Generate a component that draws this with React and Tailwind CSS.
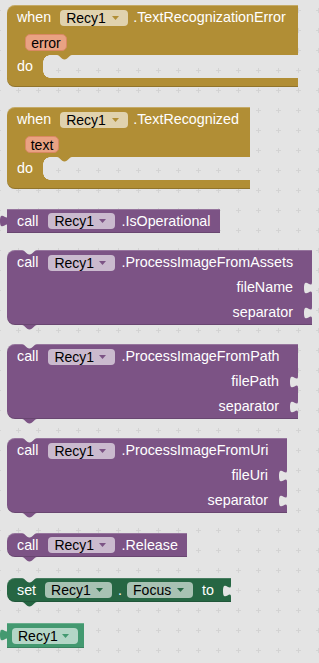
import React from "react";

const GOLD = "#b18e35";
const PURPLE = "#7c5385";
const SETG = "#266643";
const COMP = "#439970";
const BG = "#e4e4e4";

function Grid() {
  return (
    <svg className="absolute inset-0 h-full w-full" width="319" height="663">
      <defs>
        <pattern id="g" x="8" y="0" width="20" height="20" patternUnits="userSpaceOnUse">
          <rect x="8" y="10" width="5" height="1" fill="#d3d3d3" />
          <rect x="10" y="8" width="1" height="5" fill="#d3d3d3" />
        </pattern>
      </defs>
      <rect width="100%" height="100%" fill="url(#g)" />
    </svg>
  );
}

function Arrow({ fill }) {
  return (
    <svg width="7" height="4" viewBox="0 0 7 4" className="shrink-0">
      <path d="M0 0 H7 L3.5 4 Z" fill={fill} />
    </svg>
  );
}

function Dd({ label, fill, cls }) {
  return (
    <div className={"flex h-[16px] items-center justify-between rounded-[4px] bg-white/60 pl-[6px] pr-[9px] text-[14px] text-black " + cls}>
      <span className="leading-none">{label}</span>
      <Arrow fill={fill} />
    </div>
  );
}

const TAB = "M8 0 V5 C8 15 0 -3 0 12.5 C0 28 8 10 8 20 Z";

function OutTab({ fill }) {
  return (
    <svg className="absolute left-[-7px] top-[2px]" width="8" height="16" viewBox="0 0 8 20" preserveAspectRatio="none">
      <path d={TAB} fill={fill} />
    </svg>
  );
}

function Socket() {
  return (
    <svg className="absolute right-0 top-[3px]" width="8" height="16" viewBox="0 0 8 20" preserveAspectRatio="none">
      <path d={TAB} fill={BG} />
    </svg>
  );
}

function Notch() {
  return (
    <svg className="absolute left-[15px] top-0" width="15" height="5" viewBox="0 0 15 5">
      <path d="M0 0 C3 0 4 4.5 7.5 4.5 C11 4.5 12 0 15 0 Z" fill={BG} />
    </svg>
  );
}

function BottomTab({ fill }) {
  return (
    <svg className="absolute left-[15px] top-full" width="15" height="5" viewBox="0 0 15 5">
      <path d="M0 0 C3 0 4 4.5 7.5 4.5 C11 4.5 12 0 15 0 Z" fill={fill} />
    </svg>
  );
}

function EventBlock({ wcls, name, param, pcls, mcls }) {
  return (
    <div className={"relative text-white " + wcls + " " + mcls}>
      <div className="rounded-tl-[8px] bg-[#b18e35] pb-[4px] pl-[10px] pt-[4px] shadow-[inset_0_1px_0_rgba(255,255,255,0.25)]">
        <div className="flex h-[17px] items-center whitespace-nowrap">
          <span className="text-[14.3px] leading-none">when</span>
          <Dd label="Recy1" fill={GOLD} cls="ml-[9px] w-[68px]" />
          <span className="ml-[5px] text-[14.3px] leading-none">{name}</span>
        </div>
        <div className="mt-[8px] flex h-[17px]">
          <div className={"ml-[8px] flex h-[17px] items-center justify-center rounded-[5px] border border-[#d98863] bg-[#e9a283] text-[14px] leading-none text-black " + pcls}>
            {param}
          </div>
        </div>
      </div>
      <div className="flex h-[23px]">
        <div className="flex w-[36px] items-center bg-[#b18e35] pl-[10px] text-[14.3px] leading-none">do</div>
        <div className="relative flex-1">
          <div className="absolute left-0 top-0 h-[7px] w-[7px] bg-[radial-gradient(circle_at_100%_100%,transparent_6.5px,#b18e35_7px)]" />
          <div className="absolute bottom-0 left-0 h-[7px] w-[7px] bg-[radial-gradient(circle_at_100%_0%,transparent_6.5px,#b18e35_7px)]" />
          <svg className="absolute left-[14px] top-0" width="15" height="5" viewBox="0 0 15 5">
            <path d="M0 0 C3 0 4 4.5 7.5 4.5 C11 4.5 12 0 15 0 Z" fill={GOLD} />
          </svg>
        </div>
      </div>
      <div className="h-[9px] rounded-bl-[8px] bg-[#b18e35] shadow-[inset_0_-1px_0_rgba(0,0,0,0.18)]" />
    </div>
  );
}

function CallHead({ name }) {
  return (
    <div className="flex h-[25px] items-center whitespace-nowrap pl-[10px]">
      <span className="text-[14.3px] leading-none">call</span>
      <Dd label="Recy1" fill={PURPLE} cls="ml-[10px] w-[67px]" />
      <span className="ml-[6px] text-[14.3px] leading-none">{name}</span>
    </div>
  );
}

function ArgRow({ label }) {
  return (
    <div className="relative flex h-[25px] items-center justify-end pr-[19px]">
      <span className="text-[14.3px] leading-none">{label}</span>
      <Socket />
    </div>
  );
}

function ArgBlock({ wcls, mcls, name, a }) {
  return (
    <div className={"relative rounded-l-[8px] bg-[#7c5385] text-white shadow-[inset_0_1px_0_rgba(255,255,255,0.2),inset_0_-1px_0_rgba(0,0,0,0.15)] " + wcls + " " + mcls}>
      <Notch />
      <CallHead name={name} />
      <ArgRow label={a} />
      <ArgRow label="separator" />
      <BottomTab fill={PURPLE} />
    </div>
  );
}

export default function App() {
  return (
    <div className="relative h-[663px] w-[319px] overflow-hidden bg-[#e4e4e4] font-['Liberation_Sans',Arial,sans-serif]">
      <Grid />
      <div className="relative flex flex-col items-start pl-[7px] pt-[5px]">
        <EventBlock wcls="w-[291px]" mcls="" name=".TextRecognizationError" param="error" pcls="w-[42px]" />
        <EventBlock wcls="w-[243px]" mcls="mt-[20px]" name=".TextRecognized" param="text" pcls="w-[34px]" />

        <div className="relative mt-[20px] h-[24px] w-[213px] bg-[#7c5385] text-white shadow-[inset_0_1px_0_rgba(255,255,255,0.2),inset_0_-1px_0_rgba(0,0,0,0.15)]">
          <OutTab fill={PURPLE} />
          <div className="flex h-[24px] items-center whitespace-nowrap pl-[10px]">
            <span className="text-[14.3px] leading-none">call</span>
            <Dd label="Recy1" fill={PURPLE} cls="ml-[10px] w-[67px]" />
            <span className="ml-[6px] text-[14.3px] leading-none">.IsOperational</span>
          </div>
        </div>

        <ArgBlock wcls="w-[305px]" mcls="mt-[17px]" name=".ProcessImageFromAssets" a="fileName" />
        <ArgBlock wcls="w-[291px]" mcls="mt-[19px]" name=".ProcessImageFromPath" a="filePath" />
        <ArgBlock wcls="w-[280px]" mcls="mt-[19px]" name=".ProcessImageFromUri" a="fileUri" />

        <div className="relative mt-[20px] h-[24px] w-[180px] rounded-l-[8px] bg-[#7c5385] text-white shadow-[inset_0_1px_0_rgba(255,255,255,0.2),inset_0_-1px_0_rgba(0,0,0,0.15)]">
          <Notch />
          <div className="flex h-[24px] items-center whitespace-nowrap pl-[10px]">
            <span className="text-[14.3px] leading-none">call</span>
            <Dd label="Recy1" fill={PURPLE} cls="ml-[10px] w-[67px]" />
            <span className="ml-[6px] text-[14.3px] leading-none">.Release</span>
          </div>
          <BottomTab fill={PURPLE} />
        </div>

        <div className="relative mt-[21px] h-[24px] w-[224px] rounded-l-[8px] bg-[#266643] text-white shadow-[inset_0_1px_0_rgba(255,255,255,0.15),inset_0_-1px_0_rgba(0,0,0,0.15)]">
          <Notch />
          <div className="flex h-[24px] items-center whitespace-nowrap pl-[10px]">
            <span className="text-[14.3px] leading-none">set</span>
            <Dd label="Recy1" fill={SETG} cls="ml-[9px] w-[67px]" />
            <span className="ml-[6px] text-[14.3px] leading-none">.</span>
            <Dd label="Focus" fill={SETG} cls="ml-[5px] w-[66px]" />
            <span className="ml-[9px] text-[14.3px] leading-none">to</span>
          </div>
          <Socket />
          <BottomTab fill={SETG} />
        </div>

        <div className="relative mt-[21px] flex h-[25px] w-[77px] items-center bg-[#439970] pl-[5px] shadow-[inset_0_1px_0_rgba(255,255,255,0.2),inset_0_-1px_0_rgba(0,0,0,0.15)]">
          <OutTab fill={COMP} />
          <Dd label="Recy1" fill={COMP} cls="w-[66px]" />
        </div>
      </div>
    </div>
  );
}
